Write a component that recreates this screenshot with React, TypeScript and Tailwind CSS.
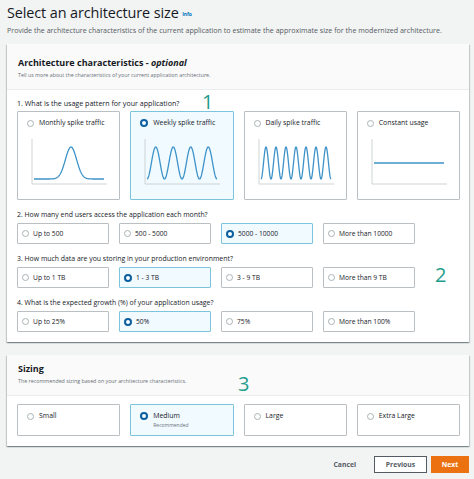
import React from 'react';

const font = "font-['Open_Sans','Liberation_Sans',sans-serif]";

// chart curves, svg box is 77 x 48
function wavePath(periods: number) {
  const pts: string[] = [];
  for (let i = 0; i <= 240; i++) {
    const x = 3 + (70 * i) / 240;
    const t = ((x - 3) / 70) * periods;
    const y = 25 + 16 * Math.cos(2 * Math.PI * t);
    pts.push(`${i === 0 ? 'M' : 'L'}${x.toFixed(2)} ${y.toFixed(2)}`);
  }
  return pts.join(' ');
}

function bellPath() {
  const pts: string[] = [];
  for (let i = 0; i <= 200; i++) {
    const x = 3 + (70 * i) / 200;
    const y = 41 - 32 * Math.exp(-((x - 40) ** 2) / (2 * 5.6 ** 2));
    pts.push(`${i === 0 ? 'M' : 'L'}${x.toFixed(2)} ${y.toFixed(2)}`);
  }
  return pts.join(' ');
}

function Chart({ kind }: { kind: 'monthly' | 'weekly' | 'daily' | 'constant' }) {
  const d =
    kind === 'monthly'
      ? bellPath()
      : kind === 'weekly'
        ? wavePath(4)
        : kind === 'daily'
          ? wavePath(7)
          : 'M3 25 L73 25';
  return (
    <svg width="77" height="48" viewBox="0 0 77 48" className="ml-[4px] mt-[11px] block">
      <path d="M1 1 V46 H76" fill="none" stroke="#c9cfd1" strokeWidth="0.9" />
      <path d={d} fill="none" stroke="#3d93c9" strokeWidth="1.3" strokeLinejoin="round" />
    </svg>
  );
}

function Radio({ checked }: { checked?: boolean }) {
  return checked ? (
    <span className="block w-[8px] h-[8px] shrink-0 rounded-full border-[2.5px] border-[#0a5fa0] bg-white" />
  ) : (
    <span className="block w-[7px] h-[7px] shrink-0 rounded-full border border-[#a9b3b6] bg-white" />
  );
}

const tileBase = 'border rounded-[1px]';
const tileOn = 'border-[#7cc4dc] bg-[#f1faff]';
const tileOff = 'border-[#b9bfc2] bg-white';

const patterns = [
  { label: 'Monthly spike traffic', kind: 'monthly' as const },
  { label: 'Weekly spike traffic', kind: 'weekly' as const, on: true },
  { label: 'Daily spike traffic', kind: 'daily' as const },
  { label: 'Constant usage', kind: 'constant' as const },
];

const questions = [
  {
    q: '2. How many end users access the application each month?',
    opts: ['Up to 500', '500 - 5000', '5000 - 10000', 'More than 10000'],
    sel: 2,
  },
  {
    q: '3. How much data are you storing in your production environment?',
    opts: ['Up to 1 TB', '1 - 3 TB', '3 - 9 TB', 'More than 9 TB'],
    sel: 1,
  },
  {
    q: '4. What is the expected growth (%) of your application usage?',
    opts: ['Up to 25%', '50%', '75%', 'More than 100%'],
    sel: 1,
  },
];

const sizes = ['Small', 'Medium', 'Large', 'Extra Large'];

const cardShadow =
  'shadow-[0_1px_1px_0_rgba(0,28,36,0.3),1px_1px_1px_0_rgba(0,28,36,0.15),-1px_1px_1px_0_rgba(0,28,36,0.15)]';

export default function App() {
  return (
    <div className={`relative min-h-screen bg-[#f2f3f3] pl-[7px] pr-[5px] pt-[3px] text-[#16191f] ${font}`}>
      <h1 className="text-[14.4px] leading-[20px] tracking-[-0.1px]">
        Select an architecture size{' '}
        <span className="text-[5px] font-bold text-[#0073bb] align-middle">Info</span>
      </h1>
      <p className="mt-[1px] text-[7.1px] leading-[10px] text-[#545b64] whitespace-nowrap">
        Provide the architecture characteristics of the current application to estimate the approximate size for the
        modernized architecture.
      </p>

      {/* characteristics card */}
      <section className={`mt-[9px] bg-white ${cardShadow}`}>
        <div className="h-[46px] bg-[#fafafa] border-b border-[#eaeded] pl-[11px] pt-[13px]">
          <h2 className="text-[9px] leading-[12px] font-bold">
            Architecture characteristics - <i>optional</i>
          </h2>
          <p className="mt-[2px] text-[5.3px] leading-[8px] text-[#687078]">
            Tell us more about the characteristics of your current application architecture.
          </p>
        </div>

        <div className="pl-[10px] pr-[9px] pt-[8px] pb-[10px]">
          <p className="text-[7.1px] leading-[10px]">1. What is the usage pattern for your application?</p>
          <div className="mt-[3px] grid grid-cols-4 gap-[10px] w-[443px]">
            {patterns.map((p) => (
              <div key={p.label} className={`h-[89px] pl-[9px] pt-[7px] ${tileBase} ${p.on ? tileOn : tileOff}`}>
                <div className="flex items-center gap-[5px] h-[8px]">
                  <Radio checked={p.on} />
                  <span className="text-[6.9px] leading-[8px] whitespace-nowrap">{p.label}</span>
                </div>
                <Chart kind={p.kind} />
              </div>
            ))}
          </div>

          {questions.map((q) => (
            <div key={q.q} className="mt-[10px]">
              <p className="text-[6.9px] leading-[10px]">{q.q}</p>
              <div className="mt-[3px] grid grid-cols-4 gap-[10px] w-[398px]">
                {q.opts.map((o, i) => (
                  <div
                    key={o}
                    className={`h-[21px] flex items-center gap-[4px] pl-[4px] ${tileBase} ${i === q.sel ? tileOn : tileOff}`}
                  >
                    <Radio checked={i === q.sel} />
                    <span className="text-[6.7px] leading-[8px] whitespace-nowrap">{o}</span>
                  </div>
                ))}
              </div>
            </div>
          ))}
        </div>
      </section>

      {/* sizing card */}
      <section className={`mt-[13px] bg-white ${cardShadow}`}>
        <div className="h-[41px] bg-[#fafafa] border-b border-[#eaeded] pl-[11px] pt-[8px]">
          <h2 className="text-[9px] leading-[12px] font-bold">Sizing</h2>
          <p className="mt-[2px] text-[5.3px] leading-[8px] text-[#687078]">
            The recommended sizing based on your architecture characteristics.
          </p>
        </div>
        <div className="pl-[10px] pr-[9px] pt-[8px] pb-[10px]">
          <div className="grid grid-cols-4 gap-[10px] w-[443px]">
            {sizes.map((s, i) => (
              <div key={s} className={`h-[32px] pl-[9px] pt-[7px] ${tileBase} ${i === 1 ? tileOn : tileOff}`}>
                <div className="flex items-center gap-[5px] h-[8px]">
                  <Radio checked={i === 1} />
                  <span className="text-[6.9px] leading-[8px]">{s}</span>
                </div>
                {i === 1 && (
                  <p className="ml-[13px] mt-[2px] text-[5px] leading-[7px] text-[#687078]">Recommended</p>
                )}
              </div>
            ))}
          </div>
        </div>
      </section>

      <div className="mt-[10px] flex items-center justify-end gap-[4px]">
        <button className="mr-[14px] text-[6.8px] font-bold text-[#545b64]">Cancel</button>
        <button className="h-[17px] w-[53px] border border-[#545b64] bg-white text-[6.8px] font-bold text-[#545b64]">
          Previous
        </button>
        <button className="h-[17px] w-[38px] bg-[#ec7211] text-[6.8px] font-bold text-white">Next</button>
      </div>

      {/* annotation numbers */}
      <span className="absolute left-[202px] top-[89px] text-[20px] leading-[26px] text-[#1f9d8c]">1</span>
      <span className="absolute left-[435px] top-[262px] text-[20px] leading-[26px] text-[#1f9d8c]">2</span>
      <span className="absolute left-[238px] top-[371px] text-[20px] leading-[26px] text-[#1f9d8c]">3</span>
    </div>
  );
}
